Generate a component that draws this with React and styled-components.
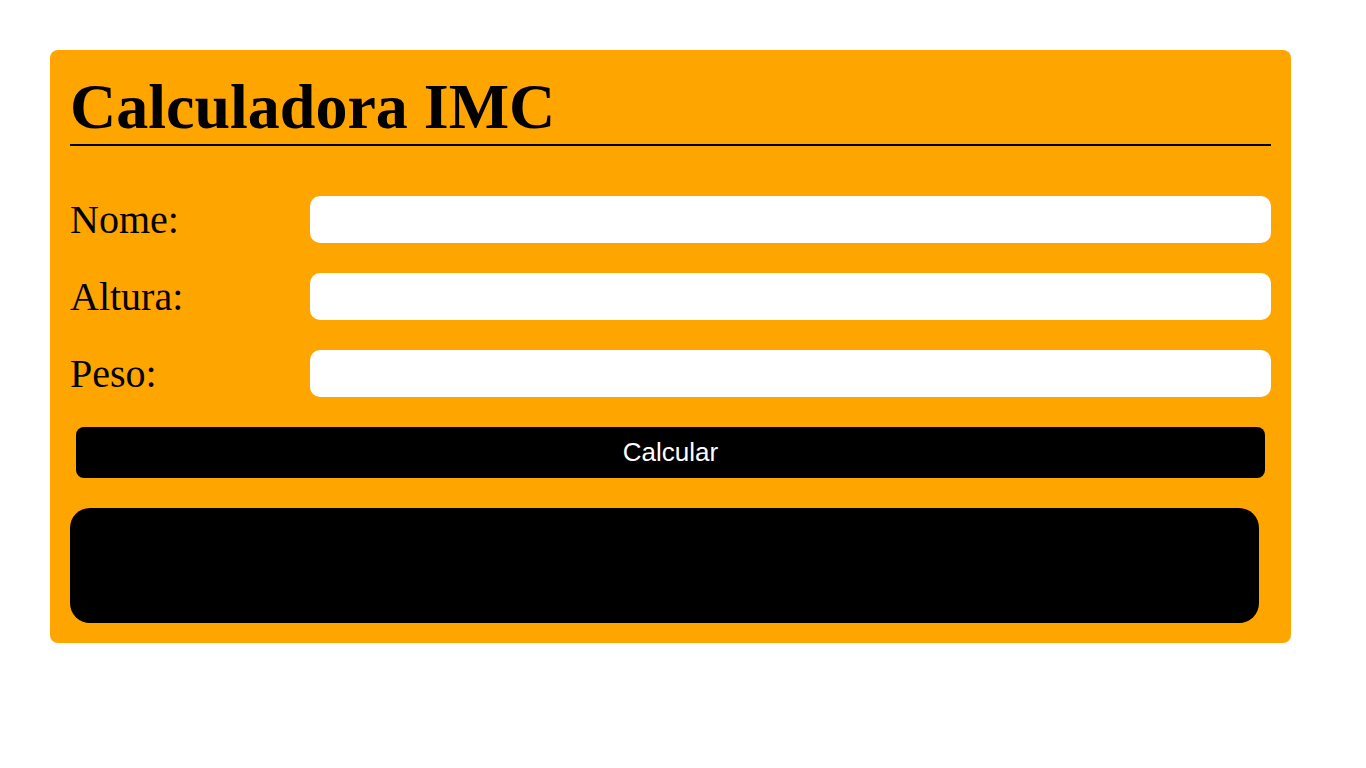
import React from 'react';
import styled, { createGlobalStyle } from 'styled-components';

const GlobalStyle = createGlobalStyle`
  body {
    margin: 0;
    background: #ffffff;
    font-family: 'Liberation Serif', 'Times New Roman', serif;
  }
`;

const Card = styled.div`
  width: 1201px;
  margin: 50px;
  padding: 20px;
  background-color: orange;
  border-radius: 8px;
`;

const Title = styled.h1`
  margin: 0;
  font-size: 64px;
  font-weight: bold;
  color: #000;
  border-bottom: 2px solid #000;
`;

const Form = styled.form`
  display: flex;
  flex-direction: column;
  gap: 30px;
  margin-top: 50px;
`;

const Row = styled.div`
  display: flex;
  align-items: center;
`;

const Label = styled.label`
  width: 20%;
  font-size: 40px;
  color: #000;
`;

const Input = styled.input`
  width: 80%;
  height: 47px;
  box-sizing: border-box;
  border: none;
  border-radius: 10px;
  background: #fff;
  padding: 0 12px;
  font-size: 20px;
  outline: none;
`;

const Button = styled.button`
  width: 99%;
  height: 51px;
  margin: 0 auto;
  border: none;
  border-radius: 8px;
  background: #000;
  color: #fff;
  font-family: 'Liberation Sans', Arial, sans-serif;
  font-size: 26px;
  cursor: pointer;
`;

const Result = styled.div`
  width: 99%;
  height: 115px;
  background: #000;
  border-radius: 20px;
  color: #fff;
`;

export default function App() {
  return (
    <>
      <GlobalStyle />
      <Card>
        <Title>Calculadora IMC</Title>
        <Form onSubmit={(e) => e.preventDefault()}>
          <Row>
            <Label htmlFor="nome">Nome:</Label>
            <Input id="nome" type="text" />
          </Row>
          <Row>
            <Label htmlFor="altura">Altura:</Label>
            <Input id="altura" type="text" />
          </Row>
          <Row>
            <Label htmlFor="peso">Peso:</Label>
            <Input id="peso" type="text" />
          </Row>
          <Button type="submit">Calcular</Button>
          <Result />
        </Form>
      </Card>
    </>
  );
}
